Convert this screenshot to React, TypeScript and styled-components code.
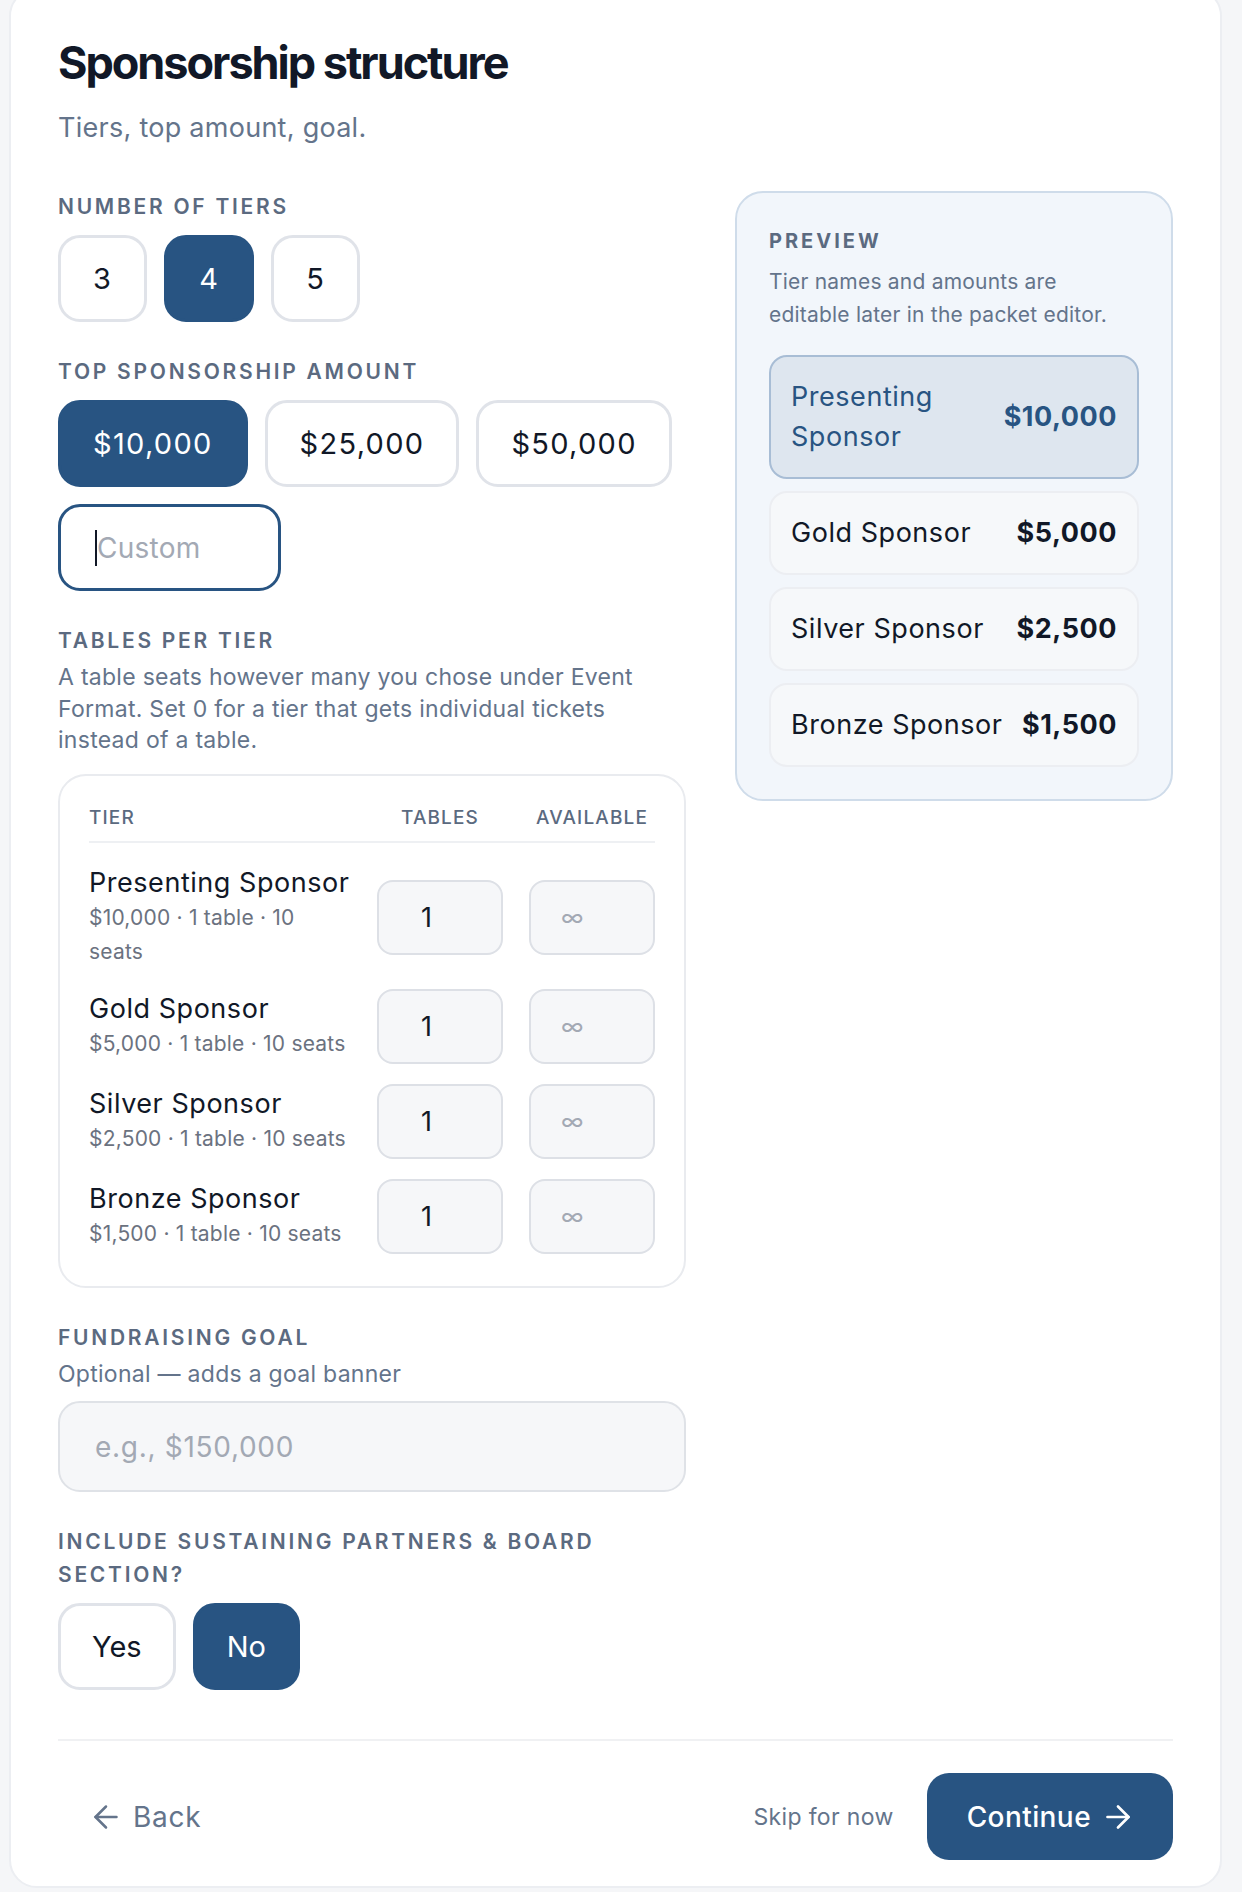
import React from 'react';
import styled, { createGlobalStyle } from 'styled-components';
import { ArrowLeft, ArrowRight } from 'lucide-react';

const GlobalStyle = createGlobalStyle`
    html, body {
        margin: 0;
        padding: 0;
        background: #f5f6f8;
        font-family: Inter, "Noto Sans", sans-serif;
        color: #111827;
    }
    * {
        box-sizing: border-box;
    }
`;

const PRIMARY = '#285482';
const MUTED = '#64748b';
const LABEL = '#5b6a80';

const Page = styled.div`
    padding: 0 20px 0 9px;
    height: 1892px;
    overflow: hidden;
`;

const Card = styled.div`
    margin-top: -12px;
    background: #fff;
    border: 2px solid #eceef2;
    border-radius: 28px;
    padding: 46px 47px 26px;
`;

const Title = styled.h1`
    margin: 0;
    font-size: 45px;
    line-height: 53px;
    font-weight: 700;
    letter-spacing: -0.045em;
    color: #111827;
`;

const Subtitle = styled.p`
    margin: 21px 0 0;
    font-size: 27px;
    line-height: 36px;
    letter-spacing: 0.01em;
    color: ${MUTED};
`;

const Columns = styled.div`
    display: grid;
    grid-template-columns: 628px 1fr;
    gap: 49px;
    margin-top: 44px;
    align-items: start;
`;

const Column = styled.div`
    display: flex;
    flex-direction: column;
`;

const Section = styled.section`
    & + & {
        margin-top: 33px;
    }
`;

const Label = styled.div`
    font-size: 21px;
    line-height: 33px;
    font-weight: 600;
    letter-spacing: 0.13em;
    text-transform: uppercase;
    color: ${LABEL};
`;

const Hint = styled.p`
    margin: 5px 0 0;
    font-size: 23px;
    line-height: 31.5px;
    letter-spacing: 0.012em;
    color: ${MUTED};
`;

const ChipRow = styled.div`
    display: flex;
    flex-wrap: wrap;
    gap: 17px;
    margin-top: 12px;
`;

const Chip = styled.button<{ $active?: boolean; $word?: boolean }>`
    height: 87px;
    padding: 0 ${p => (p.$word ? '31px' : '32px')};
    border-radius: 22px;
    border: 3px solid ${p => (p.$active ? PRIMARY : '#e0e3e9')};
    background: ${p => (p.$active ? PRIMARY : '#fff')};
    color: ${p => (p.$active ? '#fff' : '#111827')};
    font-family: inherit;
    font-size: 29px;
    letter-spacing: ${p => (p.$word ? '0' : '0.045em')};
    font-weight: 400;
    cursor: pointer;
`;

const CustomField = styled.label`
    display: flex;
    align-items: center;
    width: 223px;
    height: 87px;
    padding-left: 34px;
    border: 3px solid ${PRIMARY};
    border-radius: 22px;
    background: #fff;
`;

const Caret = styled.span`
    width: 2px;
    height: 36px;
    background: #111827;
`;

const BareInput = styled.input`
    border: none;
    outline: none;
    background: transparent;
    font-family: inherit;
    font-size: 28px;
    letter-spacing: 0.01em;
    width: 100%;
    padding: 0;
    color: #111827;
    &::placeholder {
        color: #a3a9b4;
    }
`;

const TierTable = styled.div`
    margin-top: 17px;
    border: 2px solid #e9ebef;
    border-radius: 28px;
    padding: 29px 29px 22px;
`;

const tierGrid = `
    display: grid;
    grid-template-columns: 1fr 126px 126px;
    column-gap: 26px;
`;

const THead = styled.div`
    ${tierGrid}
    padding-bottom: 10px;
    margin-bottom: 13px;
    border-bottom: 2px solid #eef0f3;
    font-size: 19px;
    line-height: 26px;
    font-weight: 500;
    letter-spacing: 0.06em;
    text-transform: uppercase;
    color: ${LABEL};
`;

const TH = styled.div<{ $center?: boolean }>`
    text-align: ${p => (p.$center ? 'center' : 'left')};
`;

const TRow = styled.div`
    ${tierGrid}
    align-items: center;
    padding: 10px 0;
`;

const TierText = styled.div`
    display: flex;
    flex-direction: column;
    gap: 1px;
`;

const TierName = styled.div`
    font-size: 27px;
    line-height: 34px;
    letter-spacing: 0.02em;
    color: #111827;
`;

const TierMeta = styled.div`
    font-size: 21px;
    line-height: 34px;
    letter-spacing: 0.01em;
    color: #6b7280;
`;

const NumBox = styled.div<{ $muted?: boolean }>`
    display: flex;
    align-items: center;
    height: 75px;
    padding-left: ${p => (p.$muted ? '30px' : '42px')};
    border: 2px solid #dde0e6;
    border-radius: 16px;
    background: #f6f7f9;
    font-size: ${p => (p.$muted ? '24px' : '27px')};
    color: ${p => (p.$muted ? '#a3a9b4' : '#111827')};
`;

const GoalInput = styled.input`
    display: block;
    width: 100%;
    height: 91px;
    margin-top: 11px;
    padding: 0 35px;
    border: 2px solid #dfe2e7;
    border-radius: 22px;
    background: #f6f7f9;
    font-family: inherit;
    font-size: 28px;
    letter-spacing: 0.025em;
    color: #111827;
    outline: none;
    &::placeholder {
        color: #a3a9b4;
    }
`;

const Preview = styled.aside`
    background: #f2f6fb;
    border: 2px solid #cfdcea;
    border-radius: 28px;
    padding: 34px 32px 32px;
    margin-top: 1px;
`;

const PreviewLabel = styled.div`
    font-size: 20px;
    line-height: 28px;
    font-weight: 700;
    letter-spacing: 0.15em;
    text-transform: uppercase;
    color: ${LABEL};
`;

const PreviewHint = styled.p`
    margin: 10px 0 0;
    font-size: 21px;
    line-height: 33px;
    letter-spacing: 0.01em;
    color: ${MUTED};
`;

const PreviewList = styled.div`
    display: flex;
    flex-direction: column;
    gap: 12px;
    margin-top: 24px;
`;

const PreviewRow = styled.div<{ $active?: boolean }>`
    display: flex;
    align-items: center;
    gap: 10px;
    padding: 20px 20px;
    border-radius: 18px;
    border: 2px solid ${p => (p.$active ? '#a8bdd5' : '#eceef2')};
    background: ${p => (p.$active ? '#dee6ef' : '#f6f8fa')};
    color: ${p => (p.$active ? PRIMARY : '#111827')};
    font-size: 27px;
    line-height: 40px;
    letter-spacing: 0.02em;
`;

const PreviewName = styled.span`
    flex: 1;
    min-width: 0;
`;

const PreviewAmount = styled.span`
    flex-shrink: 0;
    font-weight: 700;
`;

const Divider = styled.hr`
    margin: 49px 0 0;
    border: none;
    border-top: 2px solid #f0f1f3;
`;

const Footer = styled.div`
    display: flex;
    align-items: center;
    padding-top: 32px;
`;

const BackButton = styled.button`
    display: flex;
    align-items: center;
    gap: 9px;
    height: 87px;
    padding: 0 30px;
    border: none;
    background: transparent;
    font-family: inherit;
    font-size: 28px;
    letter-spacing: 0.025em;
    color: ${MUTED};
    cursor: pointer;
`;

const Spacer = styled.div`
    flex: 1;
`;

const SkipButton = styled.button`
    border: none;
    background: transparent;
    font-family: inherit;
    font-size: 23px;
    letter-spacing: 0.015em;
    color: ${MUTED};
    margin-right: 33px;
    padding: 0;
    cursor: pointer;
`;

const ContinueButton = styled.button`
    display: flex;
    align-items: center;
    gap: 9px;
    height: 87px;
    padding: 0 37px 0 40px;
    border: none;
    border-radius: 22px;
    background: ${PRIMARY};
    color: #fff;
    font-family: inherit;
    font-size: 28px;
    font-weight: 500;
    letter-spacing: 0.015em;
    cursor: pointer;
`;

const tiers = [
    { name: 'Presenting Sponsor', amount: '$10,000' },
    { name: 'Gold Sponsor', amount: '$5,000' },
    { name: 'Silver Sponsor', amount: '$2,500' },
    { name: 'Bronze Sponsor', amount: '$1,500' },
];

export default function App() {
    return (
        <Page>
            <GlobalStyle />
            <Card>
                <Title>Sponsorship structure</Title>
                <Subtitle>Tiers, top amount, goal.</Subtitle>

                <Columns>
                    <Column>
                        <Section>
                            <Label>Number of tiers</Label>
                            <ChipRow>
                                <Chip>3</Chip>
                                <Chip $active>4</Chip>
                                <Chip>5</Chip>
                            </ChipRow>
                        </Section>

                        <Section>
                            <Label>Top sponsorship amount</Label>
                            <ChipRow>
                                <Chip $active>$10,000</Chip>
                                <Chip>$25,000</Chip>
                                <Chip>$50,000</Chip>
                                <CustomField>
                                    <Caret />
                                    <BareInput placeholder="Custom" />
                                </CustomField>
                            </ChipRow>
                        </Section>

                        <Section>
                            <Label>Tables per tier</Label>
                            <Hint>
                                A table seats however many you chose under Event Format. Set 0 for a tier that gets individual tickets instead of a table.
                            </Hint>
                            <TierTable>
                                <THead>
                                    <TH>Tier</TH>
                                    <TH $center>Tables</TH>
                                    <TH $center>Available</TH>
                                </THead>
                                {tiers.map(t => (
                                    <TRow key={t.name}>
                                        <TierText>
                                            <TierName>{t.name}</TierName>
                                            <TierMeta>{t.amount} · 1 table · 10 seats</TierMeta>
                                        </TierText>
                                        <NumBox>1</NumBox>
                                        <NumBox $muted>∞</NumBox>
                                    </TRow>
                                ))}
                            </TierTable>
                        </Section>

                        <Section>
                            <Label>Fundraising goal</Label>
                            <Hint>Optional — adds a goal banner</Hint>
                            <GoalInput placeholder="e.g., $150,000" />
                        </Section>

                        <Section>
                            <Label>Include sustaining partners &amp; board section?</Label>
                            <ChipRow>
                                <Chip $word>Yes</Chip>
                                <Chip $word $active>No</Chip>
                            </ChipRow>
                        </Section>
                    </Column>

                    <Preview>
                        <PreviewLabel>Preview</PreviewLabel>
                        <PreviewHint>Tier names and amounts are editable later in the packet editor.</PreviewHint>
                        <PreviewList>
                            {tiers.map((t, i) => (
                                <PreviewRow key={t.name} $active={i === 0}>
                                    <PreviewName>{t.name}</PreviewName>
                                    <PreviewAmount>{t.amount}</PreviewAmount>
                                </PreviewRow>
                            ))}
                        </PreviewList>
                    </Preview>
                </Columns>

                <Divider />
                <Footer>
                    <BackButton>
                        <ArrowLeft size={36} strokeWidth={1.7} />
                        Back
                    </BackButton>
                    <Spacer />
                    <SkipButton>Skip for now</SkipButton>
                    <ContinueButton>
                        Continue
                        <ArrowRight size={36} strokeWidth={1.8} />
                    </ContinueButton>
                </Footer>
            </Card>
        </Page>
    );
}
